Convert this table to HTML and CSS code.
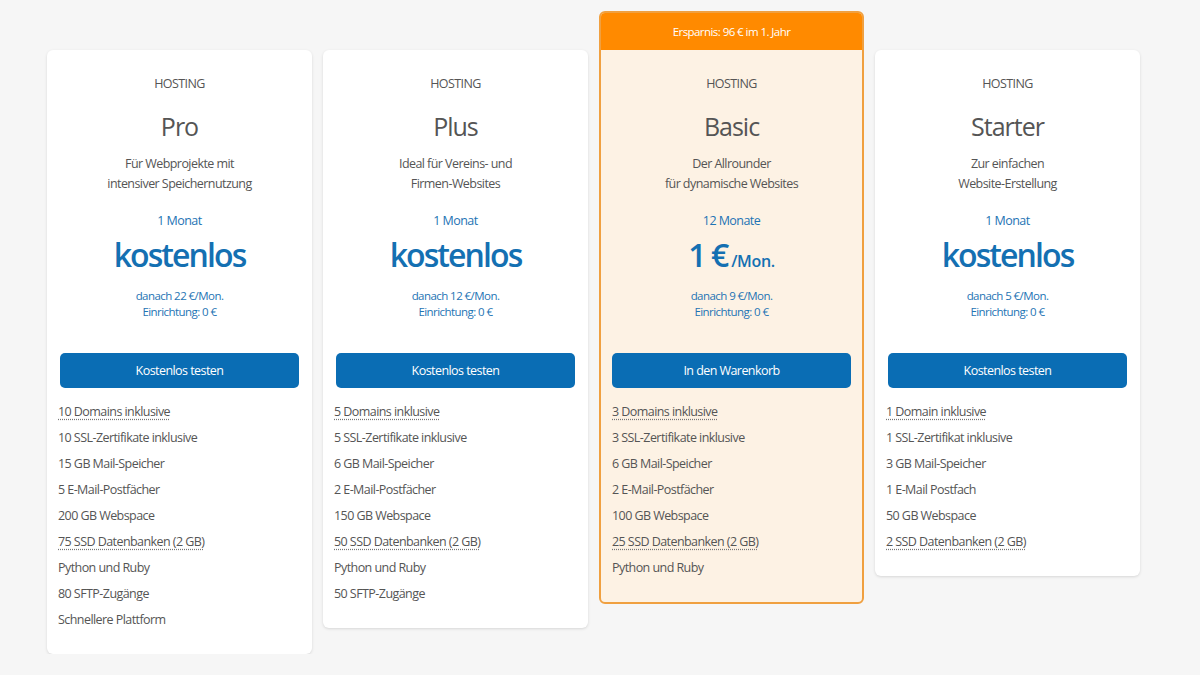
FILE: index.html
```html
<!DOCTYPE html>
<html lang="de">
<head>
<meta charset="utf-8">
<title>Hosting Tarife</title>
<link rel="stylesheet" href="styles.css">
</head>
<body>
<div class="plans">
  <div class="card">
    <div class="card-body">
      <div class="kicker">HOSTING</div>
      <div class="name">Pro</div>
      <div class="desc">Für Webprojekte mit<br>intensiver Speichernutzung</div>
      <div class="term">1 Monat</div>
      <div class="price">kostenlos</div>
      <div class="after">danach 22 €/Mon.<br>Einrichtung: 0 €</div>
      <div class="btn">Kostenlos testen</div>
      <ul class="features">
        <li><span class="dotted">10 Domains inklusive</span></li>
        <li>10 SSL-Zertifikate inklusive</li>
        <li>15 GB Mail-Speicher</li>
        <li>5 E-Mail-Postfächer</li>
        <li>200 GB Webspace</li>
        <li><span class="dotted">75 SSD Datenbanken (2 GB)</span></li>
        <li>Python und Ruby</li>
        <li>80 SFTP-Zugänge</li>
        <li>Schnellere Plattform</li>
      </ul>
    </div>
  </div>
  <div class="card">
    <div class="card-body">
      <div class="kicker">HOSTING</div>
      <div class="name">Plus</div>
      <div class="desc">Ideal für Vereins- und<br>Firmen-Websites</div>
      <div class="term">1 Monat</div>
      <div class="price">kostenlos</div>
      <div class="after">danach 12 €/Mon.<br>Einrichtung: 0 €</div>
      <div class="btn">Kostenlos testen</div>
      <ul class="features">
        <li><span class="dotted">5 Domains inklusive</span></li>
        <li>5 SSL-Zertifikate inklusive</li>
        <li>6 GB Mail-Speicher</li>
        <li>2 E-Mail-Postfächer</li>
        <li>150 GB Webspace</li>
        <li><span class="dotted">50 SSD Datenbanken (2 GB)</span></li>
        <li>Python und Ruby</li>
        <li>50 SFTP-Zugänge</li>
      </ul>
    </div>
  </div>
  <div class="card featured">
    <div class="ribbon">Ersparnis: 96 € im 1. Jahr</div>
    <div class="card-body">
      <div class="kicker">HOSTING</div>
      <div class="name">Basic</div>
      <div class="desc">Der Allrounder<br>für dynamische Websites</div>
      <div class="term">12 Monate</div>
      <div class="price">1 €<span class="unit"> /Mon.</span></div>
      <div class="after">danach 9 €/Mon.<br>Einrichtung: 0 €</div>
      <div class="btn">In den Warenkorb</div>
      <ul class="features">
        <li><span class="dotted">3 Domains inklusive</span></li>
        <li>3 SSL-Zertifikate inklusive</li>
        <li>6 GB Mail-Speicher</li>
        <li>2 E-Mail-Postfächer</li>
        <li>100 GB Webspace</li>
        <li><span class="dotted">25 SSD Datenbanken (2 GB)</span></li>
        <li>Python und Ruby</li>
      </ul>
    </div>
  </div>
  <div class="card">
    <div class="card-body">
      <div class="kicker">HOSTING</div>
      <div class="name">Starter</div>
      <div class="desc">Zur einfachen<br>Website-Erstellung</div>
      <div class="term">1 Monat</div>
      <div class="price">kostenlos</div>
      <div class="after">danach 5 €/Mon.<br>Einrichtung: 0 €</div>
      <div class="btn">Kostenlos testen</div>
      <ul class="features">
        <li><span class="dotted">1 Domain inklusive</span></li>
        <li>1 SSL-Zertifikat inklusive</li>
        <li>3 GB Mail-Speicher</li>
        <li>1 E-Mail Postfach</li>
        <li>50 GB Webspace</li>
        <li><span class="dotted">2 SSD Datenbanken (2 GB)</span></li>
      </ul>
    </div>
  </div>
</div>
</body>
</html>
```
FILE: styles.css
```css
* { box-sizing: border-box; }
html, body {
  margin: 0;
  padding: 0;
  background: #f6f6f6;
  font-family: "Open Sans", "Noto Sans", sans-serif;
  letter-spacing: -0.035em;
  color: #555;
}
.plans {
  display: flex;
  align-items: flex-start;
  gap: 11px;
  padding: 11px 0 0 47px;
}
.card {
  width: 265px;
  margin-top: 39px;
  background: #fff;
  border-radius: 6px;
  box-shadow: 0 1px 3px rgba(0, 0, 0, 0.13);
}
.card-body {
  padding: 26px 11px 21px;
  text-align: center;
}
.featured {
  margin-top: 0;
  background: #fdf2e4;
  border: 2px solid #f0a040;
  box-shadow: none;
  overflow: hidden;
}
.featured .card-body {
  padding: 26px 9px 21px;
}
.featured .features {
  padding-left: 2px;
}
.ribbon {
  background: #ff8a00;
  color: #fff;
  height: 37px;
  line-height: 37px;
  font-size: 11.5px;
  text-align: center;
}
.kicker {
  font-size: 12.5px;
  line-height: 16px;
}
.name {
  margin-top: 19px;
  font-size: 25px;
  line-height: 30px;
  font-weight: 500;
  letter-spacing: -0.04em;
  color: #555;
}
.desc {
  margin-top: 13px;
  font-size: 12.5px;
  line-height: 20px;
}
.term {
  margin-top: 18px;
  font-size: 12.5px;
  line-height: 18px;
  color: #1e74b4;
}
.price {
  margin-top: 5px;
  font-size: 32px;
  line-height: 40px;
  font-weight: 600;
  letter-spacing: -0.06em;
  color: #1470b2;
}
.unit {
  font-size: 16px;
  line-height: 1;
  letter-spacing: -0.02em;
}
.after {
  margin-top: 13px;
  font-size: 11.5px;
  line-height: 16px;
  color: #1e74b4;
}
.btn {
  margin: 33px 2px 0;
  height: 35px;
  line-height: 35px;
  background: #0a6db4;
  color: #fff;
  border-radius: 5px;
  font-size: 12.5px;
}
.features {
  list-style: none;
  margin: 11px 0 0;
  padding: 0;
  text-align: left;
}
.features li {
  font-size: 12.5px;
  line-height: 26px;
}
.dotted {
  text-decoration: underline dotted #777;
  text-underline-offset: 3px;
}
```
